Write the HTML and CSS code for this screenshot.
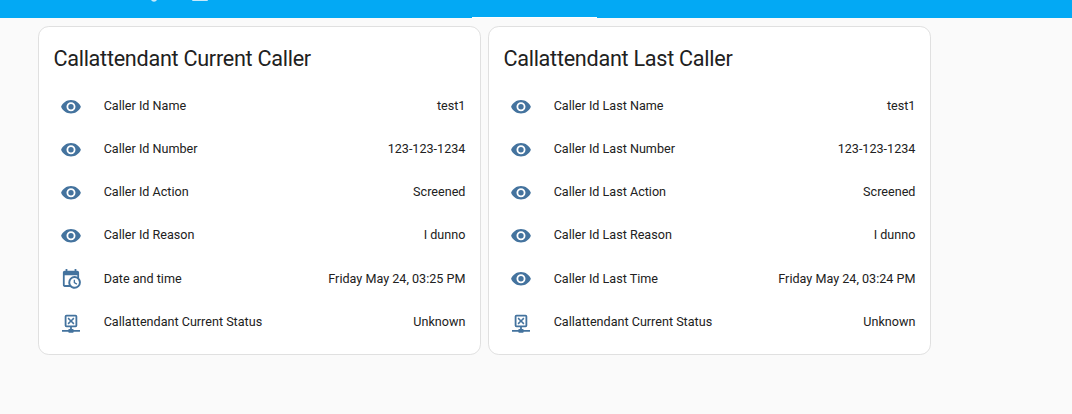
FILE: index.html
```
<!DOCTYPE html>
<html lang="en">
<head>
  <meta charset="UTF-8" />
  <meta name="viewport" content="width=device-width, initial-scale=1.0" />
  <title>Callattendant</title>
  <link rel="stylesheet" href="styles.css">
</head>
<body>
  <!-- icon shapes, shared by all rows -->
  <svg class="icon-defs" width="0" height="0">
    <symbol id="eye" viewBox="0 0 24 24">
      <path d="M12,9A3,3 0 0,0 9,12A3,3 0 0,0 12,15A3,3 0 0,0 15,12A3,3 0 0,0 12,9M12,17A5,5 0 0,1 7,12A5,5 0 0,1 12,7A5,5 0 0,1 17,12A5,5 0 0,1 12,17M12,4.5C7,4.5 2.73,7.61 1,12C2.73,16.39 7,19.5 12,19.5C17,19.5 21.27,16.39 23,12C21.27,7.61 17,4.5 12,4.5Z"/>
    </symbol>
    <symbol id="calendar-clock" viewBox="0 0 24 24">
      <path d="M15,13H16.5V15.82L18.94,17.23L18.19,18.53L15,16.69V13M19,8H5V19H9.67C9.24,18.09 9,17.07 9,16A7,7 0 0,1 16,9C17.07,9 18.09,9.24 19,9.67V8M5,21C3.89,21 3,20.1 3,19V5C3,3.89 3.89,3 5,3H6V1H8V3H16V1H18V3H19A2,2 0 0,1 21,5V11.1C22.24,12.36 23,14.09 23,16A7,7 0 0,1 16,23C14.09,23 12.36,22.24 11.1,21H5M16,11.15A4.85,4.85 0 0,0 11.15,16C11.15,18.68 13.32,20.85 16,20.85A4.85,4.85 0 0,0 20.85,16C20.85,13.32 18.68,11.15 16,11.15Z"/>
    </symbol>
    <symbol id="close-network" viewBox="0 0 24 24">
      <path d="M7,3H17A2,2 0 0,1 19,5V15A2,2 0 0,1 17,17H13V19H14A1,1 0 0,1 15,20H22V22H15A1,1 0 0,1 14,23H10A1,1 0 0,1 9,22H2V20H9A1,1 0 0,1 10,19H11V17H7A2,2 0 0,1 5,15V5A2,2 0 0,1 7,3M7,5V15H17V5H7M9.4,6.2L12,8.8L14.6,6.2L15.8,7.4L13.2,10L15.8,12.6L14.6,13.8L12,11.2L9.4,13.8L8.2,12.6L10.8,10L8.2,7.4Z"/>
    </symbol>
  </svg>

  <header class="toolbar">
    <svg class="toolbar-icons" width="60" height="2" viewBox="0 0 60 2">
      <path d="M1,0H7Q6,1.8 4,1.8T1,0ZM42,0H58Q58,1 57,1H43Q42,1 42,0Z"/>
    </svg>
    <div class="tab-indicator"></div>
  </header>

  <main class="view">
    <section class="card">
      <h1>Callattendant Current Caller</h1>
      <div class="row"><svg class="icon"><use href="#eye"/></svg><span class="name">Caller Id Name</span><span class="state">test1</span></div>
      <div class="row"><svg class="icon"><use href="#eye"/></svg><span class="name">Caller Id Number</span><span class="state">123-123-1234</span></div>
      <div class="row"><svg class="icon"><use href="#eye"/></svg><span class="name">Caller Id Action</span><span class="state">Screened</span></div>
      <div class="row"><svg class="icon"><use href="#eye"/></svg><span class="name">Caller Id Reason</span><span class="state">I dunno</span></div>
      <div class="row"><svg class="icon"><use href="#calendar-clock"/></svg><span class="name">Date and time</span><span class="state">Friday May 24, 03:25 PM</span></div>
      <div class="row"><svg class="icon"><use href="#close-network"/></svg><span class="name">Callattendant Current Status</span><span class="state">Unknown</span></div>
    </section>

    <section class="card">
      <h1>Callattendant Last Caller</h1>
      <div class="row"><svg class="icon"><use href="#eye"/></svg><span class="name">Caller Id Last Name</span><span class="state">test1</span></div>
      <div class="row"><svg class="icon"><use href="#eye"/></svg><span class="name">Caller Id Last Number</span><span class="state">123-123-1234</span></div>
      <div class="row"><svg class="icon"><use href="#eye"/></svg><span class="name">Caller Id Last Action</span><span class="state">Screened</span></div>
      <div class="row"><svg class="icon"><use href="#eye"/></svg><span class="name">Caller Id Last Reason</span><span class="state">I dunno</span></div>
      <div class="row"><svg class="icon"><use href="#eye"/></svg><span class="name">Caller Id Last Time</span><span class="state">Friday May 24, 03:24 PM</span></div>
      <div class="row"><svg class="icon"><use href="#close-network"/></svg><span class="name">Callattendant Current Status</span><span class="state">Unknown</span></div>
    </section>
  </main>
</body>
</html>
```

FILE: styles.css
```
body {
  margin: 0;
  min-height: 100vh;
  background-color: #fafafa;
  color: #212121;
  font-family: Roboto, sans-serif;
  font-size: 12.6px;
}

.icon-defs {
  position: absolute;
}

.toolbar {
  display: flex;
  align-items: flex-start;
  height: 18px;
  background-color: #03a9f4;
}

.toolbar-icons {
  margin-left: 150px;
  fill: #c5eafc;
}

.tab-indicator {
  align-self: flex-end;
  width: 125px;
  height: 1px;
  margin-left: 262px;
  background-color: #fff;
}

.view {
  display: flex;
  gap: 7px;
  padding: 8px 0 0 38px;
}

.card {
  box-sizing: border-box;
  width: 443px;
  height: 329px;
  padding: 0 14.6px 0 14.4px;
  border: 1px solid #e0e0e0;
  border-radius: 10.8px;
  background-color: #fff;
}

h1 {
  margin: 0;
  padding: 10px 0 8px;
  font-size: 21.6px;
  font-weight: 400;
  line-height: 43.2px;
  letter-spacing: -0.0125em;
}

.row {
  display: flex;
  align-items: center;
  height: 36px;
  margin-bottom: 7.2px;
}

.icon {
  width: 21.6px;
  height: 21.6px;
  padding: 0 7.2px;
  margin: 0.5px 14.3px 0 0;
  fill: #44739e;
}

.name,
.state {
  padding-bottom: 1.6px;
}

.name {
  flex: 1;
}
```
